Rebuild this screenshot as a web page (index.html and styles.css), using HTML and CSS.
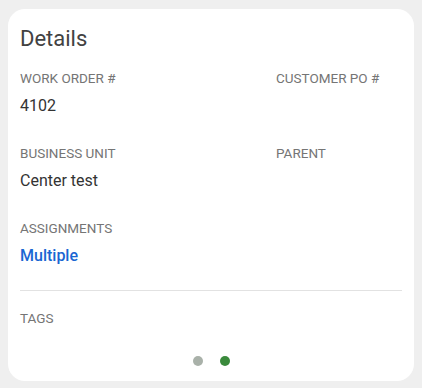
FILE: index.html
```html
<!DOCTYPE html>
<html lang="en">
<head>
    <meta charset="UTF-8">
    <meta name="viewport" content="width=device-width, initial-scale=1.0">
    <title>Details</title>
    <link rel="stylesheet" href="styles.css">
</head>
<body>
    <div class="card">
        <h1 class="card-title">Details</h1>
        <div class="field-grid">
            <div class="field">
                <div class="field-label">WORK ORDER #</div>
                <div class="field-value">4102</div>
            </div>
            <div class="field">
                <div class="field-label">CUSTOMER PO #</div>
                <div class="field-value"></div>
            </div>
            <div class="field">
                <div class="field-label">BUSINESS UNIT</div>
                <div class="field-value">Center test</div>
            </div>
            <div class="field">
                <div class="field-label">PARENT</div>
                <div class="field-value"></div>
            </div>
            <div class="field">
                <div class="field-label">ASSIGNMENTS</div>
                <div class="field-value link">Multiple</div>
            </div>
        </div>
        <div class="divider"></div>
        <div class="field-label">TAGS</div>
        <div class="pager">
            <span class="dot"></span>
            <span class="dot active"></span>
        </div>
    </div>
</body>
</html>
```
FILE: styles.css
```css
* {
    margin: 0;
    padding: 0;
    box-sizing: border-box;
}

body {
    font-family: Roboto, "Liberation Sans", sans-serif;
    background-color: #efefef;
    padding: 9px 8px 7px;
}

.card {
    background: #ffffff;
    border-radius: 17px;
    padding: 17px 12px 15px;
}

.card-title {
    font-size: 22px;
    line-height: 26px;
    font-weight: 400;
    color: #424242;
    margin-bottom: 18px;
}

.field-grid {
    display: grid;
    grid-template-columns: 256px 1fr;
    row-gap: 29px;
}

.field-label {
    font-size: 13.5px;
    line-height: 16px;
    color: #757575;
}

.field-value {
    font-size: 16px;
    line-height: 20px;
    color: #333333;
    margin-top: 10px;
    min-height: 20px;
}

.field-value.link {
    color: #1a66d2;
    font-weight: 500;
}

.divider {
    height: 1px;
    background: #e2e2e2;
    margin: 24px 0 19px;
}

.pager {
    display: flex;
    justify-content: center;
    gap: 17px;
    margin-top: 30px;
    padding-left: 1px;
}

.dot {
    width: 10px;
    height: 10px;
    border-radius: 50%;
    background: #a9b1a9;
}

.dot.active {
    background: #3a8a3c;
}
```
